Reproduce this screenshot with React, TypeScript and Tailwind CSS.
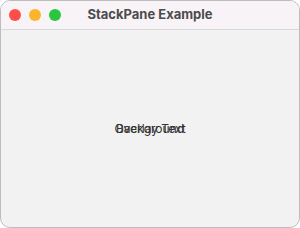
import React from "react";

export default function App() {
  return (
    <div className="w-[300px] h-[228px] bg-white">
      <div className="w-[300px] h-[228px] rounded-[10px] border border-[#bdbdbd] overflow-hidden flex flex-col bg-[#f2f2f2]">
        <div className="h-[29px] shrink-0 bg-[#f8f3f7] border-b border-[#d8d8d8] relative flex items-center px-[8px] gap-[8px]">
          <div className="w-[12px] h-[12px] rounded-full bg-[#fe4e48]" />
          <div className="w-[12px] h-[12px] rounded-full bg-[#fdb42d]" />
          <div className="w-[12px] h-[12px] rounded-full bg-[#2ac73e]" />
          <div
            className="absolute inset-0 flex items-center justify-center text-[13px] font-bold text-[#4c4c4c]"
            style={{ fontFamily: "Inter, 'Liberation Sans', sans-serif" }}
          >
            StackPane Example
          </div>
        </div>
        <div className="flex-1 grid place-items-center">
          <div
            className="grid text-[12px] text-[#333333] leading-none"
            style={{ fontFamily: "Inter, 'Liberation Sans', sans-serif" }}
          >
            <span className="col-start-1 row-start-1 justify-self-center">Background</span>
            <span className="col-start-1 row-start-1 justify-self-center">Overlay Text</span>
          </div>
        </div>
      </div>
    </div>
  );
}
